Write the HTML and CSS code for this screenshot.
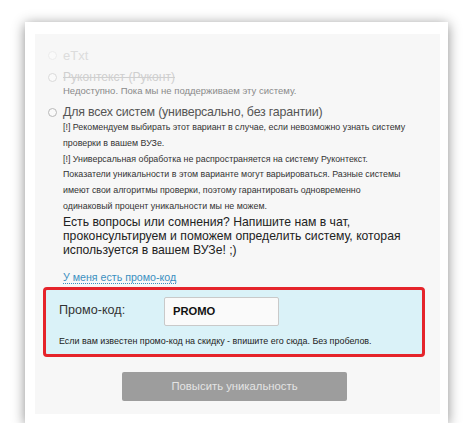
FILE: index.html
```
<!DOCTYPE html>
<html lang="ru">
<head>
<meta charset="utf-8">
<title>Промо-код</title>
<link rel="stylesheet" href="styles.css">
</head>
<body>
<div class="card">
  <div class="panel">
    <div class="opt opt-etxt"><span class="radio faint"></span><span>eTxt</span></div>
    <div class="opt opt-ruk"><span class="radio faint2"></span><span class="strike">Руконтекст (Руконт)</span></div>
    <div class="note">Недоступно. Пока мы не поддерживаем эту систему.</div>
    <div class="opt opt-all"><span class="radio"></span><span class="all-label">Для всех систем (универсально, без гарантии)</span></div>
    <div class="small">[!] Рекомендуем выбирать этот вариант в случае, если невозможно узнать систему<br>проверки в вашем ВУЗе.<br>[!] Универсальная обработка не распространяется на систему Руконтекст.<br>Показатели уникальности в этом варианте могут варьироваться. Разные системы<br>имеют свои алгоритмы проверки, поэтому гарантировать одновременно<br>одинаковый процент уникальности мы не можем.</div>
    <div class="big">Есть вопросы или сомнения? Напишите нам в чат,<br>проконсультируем и поможем определить систему, которая<br>используется в вашем ВУЗе! ;)</div>
    <div class="linkrow"><a class="promo-link" href="#">У меня есть промо-код</a></div>
    <div class="promo-box">
      <div class="promo-row">
        <span class="promo-label">Промо-код:</span>
        <span class="promo-input">PROMO</span>
      </div>
      <div class="promo-hint">Если вам известен промо-код на скидку - впишите его сюда. Без пробелов.</div>
    </div>
    <div class="btn">Повысить уникальность</div>
  </div>
</div>
</body>
</html>
```
FILE: styles.css
```
* { box-sizing: border-box; }
html, body { margin: 0; padding: 0; background: #fff; }
body { font-family: "Liberation Sans", Arial, sans-serif; color: #333; }

.card {
  margin: 22px 0 0 25px;
  width: 423px;
  height: 401px;
  background: #fff;
  box-shadow: 0 2px 12px rgba(0,0,0,0.45);
  padding: 12px 8px 9px 10px;
}
.panel {
  background: #f7f7f7;
  height: 380px;
  padding: 12px 0 0 13px;
}
.opt { display: flex; align-items: center; font-size: 12.1px; }
.radio {
  width: 9px; height: 9px;
  border: 1px solid #b8b8b8;
  border-radius: 50%;
  background: #fafafa;
  margin-right: 6px;
  flex: none;
}
.radio.faint { border-color: #ececec; }
.radio.faint2 { border-color: #dadada; }
.opt-etxt { height: 18px; color: #dcdcdc; font-size: 13px; }
.opt-ruk { height: 18px; margin-top: 4px; color: #cfcfcf; }
.strike { text-decoration: line-through; }
.note { font-size: 9.5px; line-height: 10px; color: #8a8a8a; padding-left: 15px; }
.opt-all { height: 16px; margin-top: 8px; color: #555; }
.all-label { font-size: 12.4px; letter-spacing: -0.2px; }
.small { font-size: 8.85px; line-height: 15.8px; color: #333; padding-left: 15px; white-space: nowrap; }
.big { font-size: 12.2px; line-height: 14px; color: #222; padding-left: 15px; white-space: nowrap; }
.linkrow { margin-top: 11px; height: 16px; line-height: 16px; padding-left: 15px; }
.promo-link {
  font-size: 10.65px; color: #3a8fc0; text-decoration: none;
  border-bottom: 1px dotted #3a8fc0;
}
.promo-box {
  margin: 3px 0 0 -5px;
  width: 382px;
  height: 70px;
  border: 3px solid #e5242b;
  border-radius: 4px;
  background: #daf2f8;
  padding: 7px 0 0 13px;
}
.promo-row { display: flex; align-items: center; height: 29px; }
.promo-label { width: 105px; font-size: 12.6px; color: #333; margin-top: -2px; }
.promo-input {
  width: 115px; height: 29px;
  border: 1px solid #c9c9c9; border-radius: 2px;
  background: #fafafa;
  font-weight: bold; font-size: 11.2px; color: #111;
  padding-left: 8px; line-height: 27px;
}
.promo-hint { margin-top: 9px; font-size: 8.95px; line-height: 12px; color: #222; white-space: nowrap; }
.btn {
  margin: 15px 0 0 74px;
  width: 225px; height: 29px;
  background: #9d9d9d;
  border-radius: 2px;
  color: #e4e4e4;
  font-size: 11.3px;
  text-align: center; line-height: 29px;
}
```
